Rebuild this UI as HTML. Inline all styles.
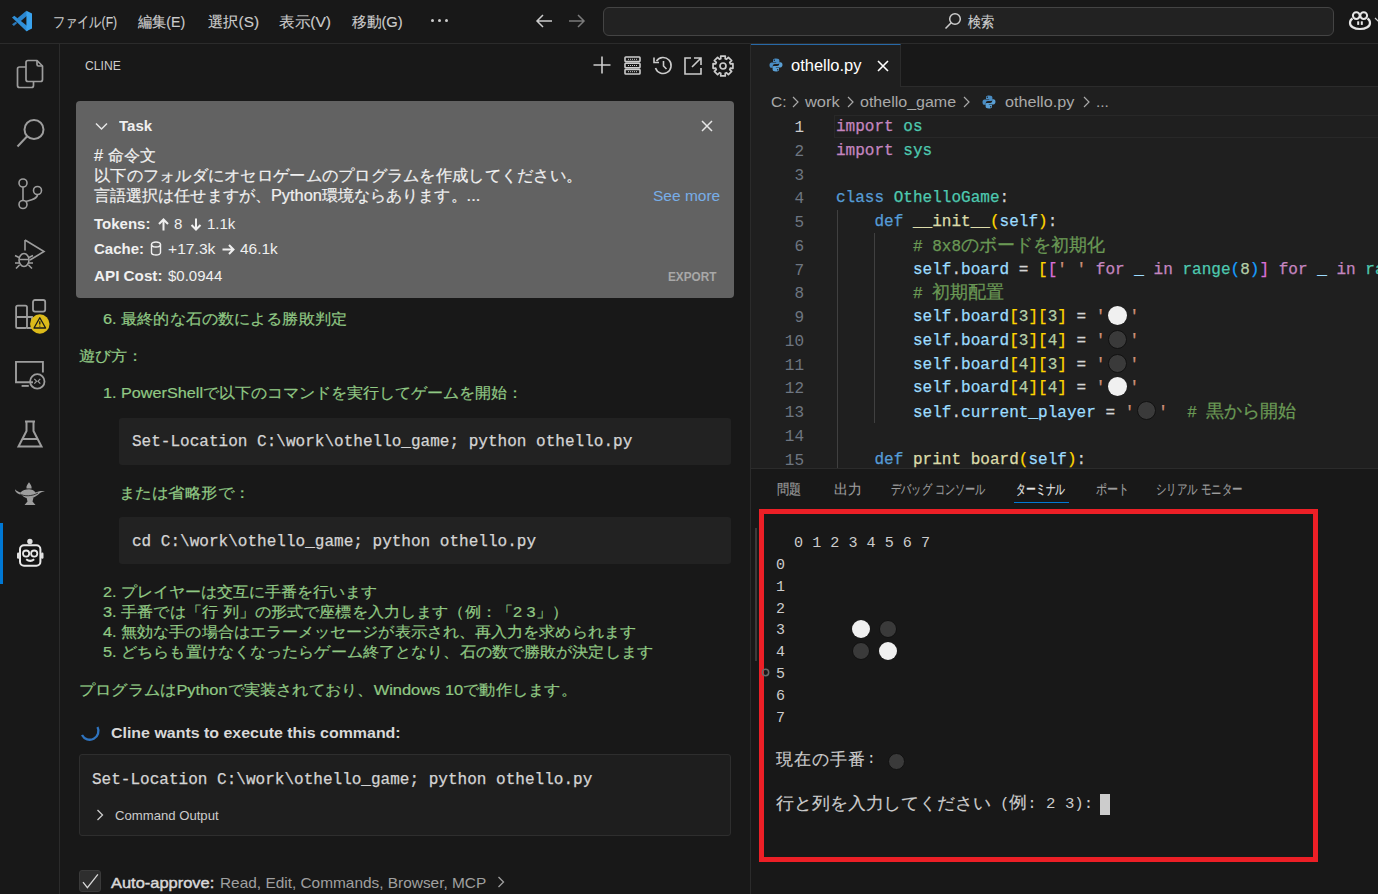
<!DOCTYPE html>
<html><head><meta charset="utf-8">
<style>
*{box-sizing:border-box;margin:0;padding:0}
html,body{width:1378px;height:894px;overflow:hidden;background:#181818;font-family:"Liberation Sans",sans-serif;color:#cccccc}
.abs{position:absolute}
.t{position:absolute;white-space:pre;line-height:1;transform-origin:0 0}
svg{position:absolute;overflow:visible}
</style></head><body>
<div class="abs" style="left:0px;top:43px;width:1378px;height:1px;background:#2b2b2b"></div>
<svg style="left:0px;top:0px" width="40" height="40" viewBox="0 0 40 40"><path d="M12 17.6L14.3 15.8L27.6 26.2V30.9L26.4 31.2Z" fill="#2f8fd8"/><path d="M26.4 10.8L27.6 15.3L20.6 21.2L17.1 18.6Z" fill="#2a86d0"/><path d="M26.4 10.8L32 13.4V28.6L26.4 31.2Z" fill="#3aa3ee"/><path d="M12 24.2L15.6 21.7L17.2 23L13.9 25.9Z" fill="#2b78b8"/></svg>
<div id="t1" class="t" style="transform:scaleX(0.8101);left:53px;top:14px;font-size:15px;color:#cccccc;font-weight:normal;font-family:'Liberation Sans',sans-serif;-webkit-text-stroke:0.15px #cccccc">ファイル(F)</div>
<div id="t2" class="t" style="transform:scaleX(0.9434);left:138px;top:14px;font-size:15px;color:#cccccc;font-weight:normal;font-family:'Liberation Sans',sans-serif;-webkit-text-stroke:0.15px #cccccc">編集(E)</div>
<div id="t3" class="t" style="transform:scaleX(1.0200);left:208px;top:14px;font-size:15px;color:#cccccc;font-weight:normal;font-family:'Liberation Sans',sans-serif;-webkit-text-stroke:0.15px #cccccc">選択(S)</div>
<div id="t4" class="t" style="transform:scaleX(1.0400);left:279px;top:14px;font-size:15px;color:#cccccc;font-weight:normal;font-family:'Liberation Sans',sans-serif;-webkit-text-stroke:0.15px #cccccc">表示(V)</div>
<div id="t5" class="t" style="transform:scaleX(0.9815);left:352px;top:14px;font-size:15px;color:#cccccc;font-weight:normal;font-family:'Liberation Sans',sans-serif;-webkit-text-stroke:0.15px #cccccc">移動(G)</div>
<div class="abs" style="left:431px;top:19px;width:3px;height:3px;background:#cccccc;border-radius:50%"></div>
<div class="abs" style="left:438px;top:19px;width:3px;height:3px;background:#cccccc;border-radius:50%"></div>
<div class="abs" style="left:445px;top:19px;width:3px;height:3px;background:#cccccc;border-radius:50%"></div>
<svg style="left:535px;top:13px" width="18" height="16" viewBox="0 0 18 16"><path d="M17 8H2M8 2L2 8L8 14" stroke="#cccccc" stroke-width="1.5" fill="none"/></svg>
<svg style="left:568px;top:13px" width="18" height="16" viewBox="0 0 18 16"><path d="M1 8H16M10 2L16 8L10 14" stroke="#7a7a7a" stroke-width="1.5" fill="none"/></svg>
<div class="abs" style="left:603px;top:7px;width:731px;height:29px;background:#222222;border:1px solid #444444;border-radius:6px"></div>
<svg style="left:944px;top:12px" width="18" height="18" viewBox="0 0 18 18"><circle cx="11" cy="7" r="5.3" stroke="#cccccc" stroke-width="1.5" fill="none"/><path d="M7.2 10.8L1.5 16.5" stroke="#cccccc" stroke-width="1.6"/></svg>
<div id="t6" class="t" style="transform:scaleX(0.8788);left:968px;top:14px;font-size:15px;color:#cccccc;font-weight:normal;font-family:'Liberation Sans',sans-serif;-webkit-text-stroke:0.15px #cccccc">検索</div>
<svg style="left:1349px;top:11px" width="22" height="19" viewBox="0 0 22 19"><path d="M3.5 7.5C1.8 8.5 1 10 1 12C1 15.5 5 18 11 18C17 18 21 15.5 21 12C21 10 20.2 8.5 18.5 7.5" stroke="#e6e6e6" stroke-width="2.2" fill="#141414"/>
<circle cx="7.3" cy="4.6" r="3.4" stroke="#e6e6e6" stroke-width="2" fill="#141414"/>
<circle cx="14.7" cy="4.6" r="3.4" stroke="#e6e6e6" stroke-width="2" fill="#141414"/>
<path d="M5 9.5H17V13.5C14 15 8 15 5 13.5Z" fill="#141414"/>
<rect x="8.2" y="10.3" width="2" height="3.6" fill="#e6e6e6"/><rect x="11.8" y="10.3" width="2" height="3.6" fill="#e6e6e6"/></svg>
<svg style="left:1374px;top:17px" width="6" height="5" viewBox="0 0 6 5"><path d="M1 1L4 4L7 1" stroke="#cccccc" stroke-width="1.2" fill="none"/></svg>
<div class="abs" style="left:59px;top:44px;width:1px;height:850px;background:#2b2b2b"></div>
<div class="abs" style="left:0px;top:523px;width:3px;height:61px;background:#0078d4"></div>
<svg style="left:16px;top:59px" width="28" height="30" viewBox="0 0 28 30"><path d="M12 1.5H21L26.5 7V20.5Q26.5 22.5 24.5 22.5H12Q10 22.5 10 20.5V3.5Q10 1.5 12 1.5Z" stroke="#9d9d9d" fill="none" stroke-width="1.6" stroke-linejoin="round" style="stroke-width:1.7"/><path d="M21 1.5V5.5Q21 7 22.5 7H26.5" stroke="#9d9d9d" fill="none" stroke-width="1.6" style="stroke-width:1.7"/><path d="M10 8H3.5Q1.5 8 1.5 10V26.5Q1.5 28.5 3.5 28.5H15.5Q17.5 28.5 17.5 26.5V22.5" stroke="#9d9d9d" fill="none" stroke-width="1.6" style="stroke-width:1.7"/></svg>
<svg style="left:16px;top:118px" width="30" height="30" viewBox="0 0 30 30"><circle cx="18" cy="11.5" r="9.5" stroke="#9d9d9d" fill="none" stroke-width="1.6" style="stroke-width:2"/><path d="M11.2 18.3L1.5 28.5" stroke="#9d9d9d" fill="none" stroke-width="1.6" style="stroke-width:2"/></svg>
<svg style="left:17px;top:178px" width="26" height="32" viewBox="0 0 26 32"><circle cx="6" cy="5" r="4" stroke="#9d9d9d" fill="none" stroke-width="1.6"/><circle cx="6" cy="26.5" r="4" stroke="#9d9d9d" fill="none" stroke-width="1.6"/><circle cx="20.5" cy="12.5" r="4" stroke="#9d9d9d" fill="none" stroke-width="1.6"/><path d="M6 9V22.5M20.5 16.5C20.5 21 14 22 8.5 23.5" stroke="#9d9d9d" fill="none" stroke-width="1.6"/></svg>
<svg style="left:14px;top:238px" width="32" height="32" viewBox="0 0 32 32"><path d="M11 2V12.5M11 2L30 13.5L16 22" stroke="#9d9d9d" fill="none" stroke-width="1.6"/><ellipse cx="10" cy="22" rx="5" ry="6.5" stroke="#9d9d9d" fill="none" stroke-width="1.6"/><path d="M1 17.5L5 19.5M1 25H5M2 30.5L5.5 27M19 17.5L15 19.5M19 25H15M18 30.5L14.5 27M5.5 21.5H14.5" stroke="#9d9d9d" fill="none" stroke-width="1.6"/></svg>
<svg style="left:10px;top:292px" width="40" height="48" viewBox="0 0 40 48"><rect x="6.1" y="13.6" width="10.9" height="22.4" rx="1.6" stroke="#9d9d9d" fill="none" stroke-width="1.6" style="stroke-width:1.8"/><path d="M6.1 25H22V36H17" stroke="#9d9d9d" fill="none" stroke-width="1.6" style="stroke-width:1.8"/>
<rect x="23" y="8" width="12.2" height="11.6" rx="2" stroke="#9d9d9d" fill="none" stroke-width="1.6" style="stroke-width:1.8"/>
<circle cx="29.8" cy="32" r="9.7" fill="#dcba1a"/>
<path d="M29.8 25.8L35.6 36H24Z" stroke="#1a1a1a" stroke-width="1.3" fill="none" stroke-linejoin="round"/><path d="M29.8 29.3V32.6M29.8 33.8V34.6" stroke="#1a1a1a" stroke-width="1.3"/></svg>
<svg style="left:10px;top:355px" width="40" height="40" viewBox="0 0 40 40"><path d="M23 27.3H6V6.9H32.9V17.4" stroke="#9d9d9d" fill="none" stroke-width="1.6" style="stroke-width:1.9"/><path d="M11.6 30.9H18.8" stroke="#9d9d9d" fill="none" stroke-width="1.6" style="stroke-width:1.9"/><circle cx="27.3" cy="26.4" r="7.2" stroke="#9d9d9d" fill="none" stroke-width="1.6" style="stroke-width:1.8"/><path d="M24.3 23.8L26.6 26.2L24.3 28.6M30.3 23.8L28 26.2L30.3 28.6" stroke="#9d9d9d" fill="none" stroke-width="1.6" style="stroke-width:1.2"/></svg>
<svg style="left:17px;top:420px" width="26" height="28" viewBox="0 0 26 28"><path d="M8 1.5H18M9.5 1.5V11L1.5 26.5H24.5L16.5 11V1.5M5 19H21" stroke="#9d9d9d" fill="none" stroke-width="1.6" style="stroke-width:2"/></svg>
<svg style="left:14px;top:481px" width="32" height="26" viewBox="0 0 32 26"><path d="M15 1.2C13.6 3 12 5 12.5 7.4H17.6C18 5 16.4 3 15 1.2Z" fill="#9d9d9d"/><path d="M1 8.3C1 11 3.5 13 8 14.2C10 16.5 13 17.3 16 17.3C20 17.3 23 14.5 26 12C28 10.8 29.5 10.5 31 10.2C27 9.6 24 10.2 21.5 11.5C20 9.2 17.5 8.2 15 8.2C11.5 8.2 8.5 9.2 6.5 11.5C4.5 11 2.5 10 1 8.3Z" fill="#9d9d9d"/><path d="M6 13C10 15.5 18 15.5 24 12" stroke="#181818" stroke-width="0.8" fill="none"/><path d="M12.5 16.5H19.5L18.5 20.5L21.5 24H10.5L13.5 20.5Z" fill="#9d9d9d"/></svg>
<svg style="left:15px;top:537px" width="30" height="32" viewBox="0 0 30 32"><circle cx="14.9" cy="4.4" r="2.7" fill="#e0e0e0"/>
<rect x="5" y="8.3" width="20.4" height="20.4" rx="4" fill="#141414" stroke="#e8e8e8" stroke-width="2"/>
<rect x="2" y="15.6" width="2.5" height="6.1" rx="1.2" fill="#e0e0e0"/><rect x="26" y="15.6" width="2.5" height="6.1" rx="1.2" fill="#e0e0e0"/>
<circle cx="11.1" cy="16.6" r="3.1" fill="none" stroke="#e8e8e8" stroke-width="1.8"/><circle cx="19.2" cy="16.6" r="3.1" fill="none" stroke="#e8e8e8" stroke-width="1.8"/>
<path d="M11.2 22.2Q15.2 25.5 19.2 22.2" stroke="#e8e8e8" stroke-width="2" fill="none"/></svg>
<div class="abs" style="left:750px;top:44px;width:1px;height:850px;background:#2b2b2b"></div>
<div id="t7" class="t" style="transform:scaleX(0.9000);left:85px;top:59px;font-size:13.5px;color:#cccccc;font-weight:normal;font-family:'Liberation Sans',sans-serif;">CLINE</div>
<svg style="left:593px;top:56px" width="18" height="18" viewBox="0 0 18 18"><path d="M9 0.5V17.5M0.5 9H17.5" stroke="#cccccc" stroke-width="1.6"/></svg>
<svg style="left:624px;top:56px" width="17" height="19" viewBox="0 0 17 19"><rect x="1" y="1" width="15" height="4.6" rx="0.8" stroke="#cccccc" fill="none" stroke-width="1.6"/><rect x="1" y="7.2" width="15" height="4.6" rx="0.8" stroke="#cccccc" fill="none" stroke-width="1.6"/><rect x="1" y="13.4" width="15" height="4.6" rx="0.8" stroke="#cccccc" fill="none" stroke-width="1.6"/><path d="M4 3.3H13M4 9.5H13M4 15.7H13" stroke="#cccccc" stroke-width="1" stroke-dasharray="1 1"/></svg>
<svg style="left:653px;top:56px" width="20" height="19" viewBox="0 0 20 19"><path d="M3.5 5A8 8 0 1 1 2.5 12" stroke="#cccccc" fill="none" stroke-width="1.6"/><path d="M1 1.5V6.5H6" stroke="#cccccc" fill="none" stroke-width="1.6"/><path d="M10.5 5V10L13.5 13" stroke="#cccccc" fill="none" stroke-width="1.6"/></svg>
<svg style="left:684px;top:57px" width="18" height="18" viewBox="0 0 18 18"><path d="M7 1H1V17H17V11M10 1H17V8M17 1L8 10" stroke="#cccccc" fill="none" stroke-width="1.6"/></svg>
<svg style="left:712px;top:55px" width="22" height="22" viewBox="0 0 22 22"><path d="M18.27 8.78 L20.94 8.71 L20.94 13.29 L18.27 13.22 L17.71 14.57 L19.65 16.41 L16.41 19.65 L14.57 17.71 L13.22 18.27 L13.29 20.94 L8.71 20.94 L8.78 18.27 L7.43 17.71 L5.59 19.65 L2.35 16.41 L4.29 14.57 L3.73 13.22 L1.06 13.29 L1.06 8.71 L3.73 8.78 L4.29 7.43 L2.35 5.59 L5.59 2.35 L7.43 4.29 L8.78 3.73 L8.71 1.06 L13.29 1.06 L13.22 3.73 L14.57 4.29 L16.41 2.35 L19.65 5.59 L17.71 7.43Z" stroke="#cccccc" fill="none" stroke-width="1.6" style="stroke-width:1.7;stroke-linejoin:round"/><circle cx="11" cy="11" r="3" stroke="#cccccc" fill="none" stroke-width="1.6" style="stroke-width:1.7"/></svg>
<div class="abs" style="left:76px;top:101px;width:658px;height:197px;background:#626262;border-radius:4px"></div>
<svg style="left:95px;top:122px" width="13" height="9" viewBox="0 0 13 9"><path d="M1 1.5L6.5 7L12 1.5" stroke="#e6e6e6" stroke-width="1.5" fill="none"/></svg>
<div id="t8" class="t" style="transform:scaleX(0.9706);left:119px;top:118px;font-size:15.5px;color:#f0f0f0;font-weight:bold;font-family:'Liberation Sans',sans-serif;">Task</div>
<svg style="left:701px;top:120px" width="12" height="12" viewBox="0 0 12 12"><path d="M1 1L11 11M11 1L1 11" stroke="#e6e6e6" stroke-width="1.5"/></svg>
<div id="t9" class="t" style="left:94px;top:147px;font-size:16.3px;color:#f0f0f0;font-weight:normal;font-family:'Liberation Sans',sans-serif;-webkit-text-stroke:0.2px #f0f0f0"># 命令文</div>
<div id="t10" class="t" style="transform:scaleX(1.0170);left:94px;top:167px;font-size:16.3px;color:#f0f0f0;font-weight:normal;font-family:'Liberation Sans',sans-serif;-webkit-text-stroke:0.2px #f0f0f0">以下のフォルダにオセロゲームのプログラムを作成してください。</div>
<div id="t11" class="t" style="transform:scaleX(1.0052);left:94px;top:187px;font-size:16.3px;color:#f0f0f0;font-weight:normal;font-family:'Liberation Sans',sans-serif;-webkit-text-stroke:0.2px #f0f0f0">言語選択は任せますが、Python環境ならあります。...</div>
<div id="t12" class="t" style="transform:scaleX(1.0000);left:653px;top:188px;font-size:15.5px;color:#78aee8;font-weight:normal;font-family:'Liberation Sans',sans-serif;">See more</div>
<div id="t13" class="t" style="transform:scaleX(1.0000);left:94px;top:216px;font-size:15px;color:#f0f0f0;font-weight:normal;font-family:'Liberation Sans',sans-serif;"><b>Tokens:</b></div>
<svg style="left:158px;top:218px" width="11" height="13" viewBox="0 0 11 13"><path d="M5.5 12.5V1.5M1 6L5.5 1.5L10 6" stroke="#f0f0f0" stroke-width="2" fill="none"/></svg>
<div id="t14" class="t" style="left:174px;top:216px;font-size:15px;color:#f0f0f0;font-weight:normal;font-family:'Liberation Sans',sans-serif;">8</div>
<svg style="left:190px;top:218px" width="12" height="13" viewBox="0 0 12 13"><path d="M6 0.5V11.5M1.5 7L6 11.5L10.5 7" stroke="#f0f0f0" stroke-width="2" fill="none"/></svg>
<div id="t15" class="t" style="transform:scaleX(1.0000);left:207px;top:216px;font-size:15px;color:#f0f0f0;font-weight:normal;font-family:'Liberation Sans',sans-serif;">1.1k</div>
<div id="t16" class="t" style="transform:scaleX(1.0000);left:94px;top:241px;font-size:15px;color:#f0f0f0;font-weight:normal;font-family:'Liberation Sans',sans-serif;"><b>Cache:</b></div>
<svg style="left:150px;top:241px" width="12" height="15" viewBox="0 0 12 15"><path d="M1.5 3.5V11.5C1.5 13 3.5 14 6 14C8.5 14 10.5 13 10.5 11.5V3.5" stroke="#f0f0f0" stroke-width="1.4" fill="none"/><ellipse cx="6" cy="3.5" rx="4.5" ry="2.5" stroke="#f0f0f0" stroke-width="1.4" fill="none"/></svg>
<div id="t17" class="t" style="transform:scaleX(1.0435);left:168px;top:241px;font-size:15px;color:#f0f0f0;font-weight:normal;font-family:'Liberation Sans',sans-serif;">+17.3k</div>
<svg style="left:222px;top:244px" width="13" height="11" viewBox="0 0 13 11"><path d="M0.5 5.5H11.5M7 1L11.5 5.5L7 10" stroke="#f0f0f0" stroke-width="2" fill="none"/></svg>
<div id="t18" class="t" style="transform:scaleX(1.0270);left:240px;top:241px;font-size:15px;color:#f0f0f0;font-weight:normal;font-family:'Liberation Sans',sans-serif;">46.1k</div>
<div id="t19" class="t" style="transform:scaleX(1.0149);left:94px;top:268px;font-size:15px;color:#f0f0f0;font-weight:normal;font-family:'Liberation Sans',sans-serif;"><b>API Cost:</b></div>
<div id="t20" class="t" style="transform:scaleX(1.0000);left:168px;top:268px;font-size:15px;color:#f0f0f0;font-weight:normal;font-family:'Liberation Sans',sans-serif;">$0.0944</div>
<div id="t21" class="t" style="transform:scaleX(0.9074);left:668px;top:270px;font-size:13px;color:#a8a8a8;font-weight:bold;font-family:'Liberation Sans',sans-serif;">EXPORT</div>
<div id="t22" class="t" style="transform:scaleX(1.0752);left:103px;top:311px;font-size:15.2px;color:#90c884;font-weight:normal;font-family:'Liberation Sans',sans-serif;-webkit-text-stroke:0.2px #90c884">6. 最終的な石の数による勝敗判定</div>
<div id="t23" class="t" style="transform:scaleX(1.0741);left:79px;top:348px;font-size:15.2px;color:#90c884;font-weight:normal;font-family:'Liberation Sans',sans-serif;-webkit-text-stroke:0.2px #90c884">遊び方：</div>
<div id="t24" class="t" style="transform:scaleX(1.0670);left:103px;top:385px;font-size:15.2px;color:#90c884;font-weight:normal;font-family:'Liberation Sans',sans-serif;-webkit-text-stroke:0.2px #90c884">1. PowerShellで以下のコマンドを実行してゲームを開始：</div>
<div class="abs" style="left:119px;top:418px;width:612px;height:47px;background:#222222;border-radius:3px"></div>
<div id="t25" class="t" style="left:132px;top:433.5px;font-size:16.04px;color:#d4d4d4;font-weight:normal;font-family:'Liberation Mono',monospace;-webkit-text-stroke-width:0.25px">Set-Location C:\work\othello_game; python othello.py</div>
<div id="t26" class="t" style="transform:scaleX(1.0965);left:119px;top:485px;font-size:15.2px;color:#90c884;font-weight:normal;font-family:'Liberation Sans',sans-serif;-webkit-text-stroke:0.2px #90c884">または省略形で：</div>
<div class="abs" style="left:119px;top:517px;width:612px;height:47px;background:#222222;border-radius:3px"></div>
<div id="t27" class="t" style="left:132px;top:533.5px;font-size:16.04px;color:#d4d4d4;font-weight:normal;font-family:'Liberation Mono',monospace;-webkit-text-stroke-width:0.25px">cd C:\work\othello_game; python othello.py</div>
<div id="t28" class="t" style="transform:scaleX(1.0661);left:103px;top:584px;font-size:15.2px;color:#90c884;font-weight:normal;font-family:'Liberation Sans',sans-serif;-webkit-text-stroke:0.2px #90c884">2. プレイヤーは交互に手番を行います</div>
<div id="t29" class="t" style="transform:scaleX(1.0757);left:103px;top:604px;font-size:15.2px;color:#90c884;font-weight:normal;font-family:'Liberation Sans',sans-serif;-webkit-text-stroke:0.2px #90c884">3. 手番では「行 列」の形式で座標を入力します（例：「2 3」）</div>
<div id="t30" class="t" style="transform:scaleX(1.0724);left:103px;top:624px;font-size:15.2px;color:#90c884;font-weight:normal;font-family:'Liberation Sans',sans-serif;-webkit-text-stroke:0.2px #90c884">4. 無効な手の場合はエラーメッセージが表示され、再入力を求められます</div>
<div id="t31" class="t" style="transform:scaleX(1.0742);left:103px;top:644px;font-size:15.2px;color:#90c884;font-weight:normal;font-family:'Liberation Sans',sans-serif;-webkit-text-stroke:0.2px #90c884">5. どちらも置けなくなったらゲーム終了となり、石の数で勝敗が決定します</div>
<div id="t32" class="t" style="transform:scaleX(1.0822);left:79px;top:682px;font-size:15.2px;color:#90c884;font-weight:normal;font-family:'Liberation Sans',sans-serif;-webkit-text-stroke:0.2px #90c884">プログラムはPythonで実装されており、Windows 10で動作します。</div>
<svg style="left:80px;top:725px" width="20" height="17" viewBox="0 0 20 17"><path d="M17.5 2A8 8 0 0 1 2 10" stroke="#2f74c0" stroke-width="2.3" fill="none"/></svg>
<div id="t33" class="t" style="transform:scaleX(1.0285);left:111px;top:725px;font-size:15.5px;color:#d8d8d8;font-weight:bold;font-family:'Liberation Sans',sans-serif;">Cline wants to execute this command:</div>
<div class="abs" style="left:79px;top:754px;width:652px;height:82px;background:#1e1e1e;border:1px solid #2e2e2e;border-radius:3px"></div>
<div id="t34" class="t" style="left:92px;top:771.5px;font-size:16.04px;color:#d4d4d4;font-weight:normal;font-family:'Liberation Mono',monospace;-webkit-text-stroke-width:0.25px">Set-Location C:\work\othello_game; python othello.py</div>
<svg style="left:96px;top:809px" width="8" height="12" viewBox="0 0 8 12"><path d="M1.5 1L6.5 6L1.5 11" stroke="#cccccc" stroke-width="1.3" fill="none"/></svg>
<div id="t35" class="t" style="transform:scaleX(1.0097);left:115px;top:809px;font-size:13px;color:#cccccc;font-weight:normal;font-family:'Liberation Sans',sans-serif;">Command Output</div>
<div class="abs" style="left:79px;top:870px;width:22px;height:22px;background:#2e2e2e;border:1px solid #3a3a3a;border-radius:3px"></div>
<svg style="left:82px;top:873px" width="17" height="16" viewBox="0 0 17 16"><path d="M1 9.2L5.4 14.6L15.9 1.4" stroke="#d8d8d8" stroke-width="1.3" fill="none"/></svg>
<div id="t36" class="t" style="transform:scaleX(1.0957);left:111px;top:875px;font-size:15px;color:#d8d8d8;font-weight:normal;font-family:'Liberation Sans',sans-serif;-webkit-text-stroke:0.45px #d8d8d8">Auto-approve:</div>
<div id="t37" class="t" style="transform:scaleX(1.0270);left:220px;top:875px;font-size:15px;color:#a0a0a0;font-weight:normal;font-family:'Liberation Sans',sans-serif;">Read, Edit, Commands, Browser, MCP</div>
<svg style="left:497px;top:876px" width="8" height="12" viewBox="0 0 8 12"><path d="M1.5 1L6.5 6L1.5 11" stroke="#a0a0a0" stroke-width="1.3" fill="none"/></svg>
<div class="abs" style="left:751px;top:44px;width:627px;height:424px;background:#1f1f1f"></div>
<div class="abs" style="left:751px;top:44px;width:627px;height:43px;background:#181818;border-bottom:1px solid #2b2b2b"></div>
<div class="abs" style="left:751px;top:44px;width:150px;height:43px;background:#1f1f1f;border-top:1px solid #2769a8;border-right:1px solid #2b2b2b"></div>
<svg style="left:769px;top:58px" width="14" height="14" viewBox="0 0 14 14"><path d="M7 0.5C4 0.5 4 1.7 4 2.5V4H7.2V4.6H2.6C1.2 4.6 0.5 5.7 0.5 7.2C0.5 8.8 1.2 9.8 2.6 9.8H3.8V8.1C3.8 6.9 4.7 6.1 5.9 6.1H8.9C9.8 6.1 10.4 5.4 10.4 4.6V2.5C10.4 1.4 9.5 0.5 7 0.5Z" fill="#4a8cc2"/><path d="M7 13.5C10 13.5 10 12.3 10 11.5V10H6.8V9.4H11.4C12.8 9.4 13.5 8.3 13.5 6.8C13.5 5.2 12.8 4.2 11.4 4.2H10.2V5.9C10.2 7.1 9.3 7.9 8.1 7.9H5.1C4.2 7.9 3.6 8.6 3.6 9.4V11.5C3.6 12.6 4.5 13.5 7 13.5Z" fill="#5a9fd4"/><circle cx="5.3" cy="2.3" r="0.7" fill="#1f1f1f"/><circle cx="8.7" cy="11.7" r="0.7" fill="#1f1f1f"/></svg>
<div id="t38" class="t" style="transform:scaleX(1.0290);left:791px;top:58px;font-size:16px;color:#ffffff;font-weight:normal;font-family:'Liberation Sans',sans-serif;">othello.py</div>
<svg style="left:877px;top:60px" width="12" height="12" viewBox="0 0 12 12"><path d="M1 1L11 11M11 1L1 11" stroke="#ffffff" stroke-width="1.6"/></svg>
<div id="t39" class="t" style="left:771px;top:94px;font-size:15.5px;color:#a9a9a9;font-weight:normal;font-family:'Liberation Sans',sans-serif;">C:</div>
<svg style="left:792px;top:96px" width="7" height="12" viewBox="0 0 7 12"><path d="M1 1L6 6L1 11" stroke="#a9a9a9" stroke-width="1.2" fill="none"/></svg>
<div id="t40" class="t" style="transform:scaleX(1.0606);left:805px;top:94px;font-size:15.5px;color:#a9a9a9;font-weight:normal;font-family:'Liberation Sans',sans-serif;">work</div>
<svg style="left:847px;top:96px" width="7" height="12" viewBox="0 0 7 12"><path d="M1 1L6 6L1 11" stroke="#a9a9a9" stroke-width="1.2" fill="none"/></svg>
<div id="t41" class="t" style="transform:scaleX(1.0323);left:860px;top:94px;font-size:15.5px;color:#a9a9a9;font-weight:normal;font-family:'Liberation Sans',sans-serif;">othello_game</div>
<svg style="left:963px;top:96px" width="7" height="12" viewBox="0 0 7 12"><path d="M1 1L6 6L1 11" stroke="#a9a9a9" stroke-width="1.2" fill="none"/></svg>
<svg style="left:982px;top:95px" width="14" height="14" viewBox="0 0 14 14"><path d="M7 0.5C4 0.5 4 1.7 4 2.5V4H7.2V4.6H2.6C1.2 4.6 0.5 5.7 0.5 7.2C0.5 8.8 1.2 9.8 2.6 9.8H3.8V8.1C3.8 6.9 4.7 6.1 5.9 6.1H8.9C9.8 6.1 10.4 5.4 10.4 4.6V2.5C10.4 1.4 9.5 0.5 7 0.5Z" fill="#4a8cc2"/><path d="M7 13.5C10 13.5 10 12.3 10 11.5V10H6.8V9.4H11.4C12.8 9.4 13.5 8.3 13.5 6.8C13.5 5.2 12.8 4.2 11.4 4.2H10.2V5.9C10.2 7.1 9.3 7.9 8.1 7.9H5.1C4.2 7.9 3.6 8.6 3.6 9.4V11.5C3.6 12.6 4.5 13.5 7 13.5Z" fill="#5a9fd4"/><circle cx="5.3" cy="2.3" r="0.7" fill="#1f1f1f"/><circle cx="8.7" cy="11.7" r="0.7" fill="#1f1f1f"/></svg>
<div id="t42" class="t" style="transform:scaleX(1.0448);left:1005px;top:94px;font-size:15.5px;color:#a9a9a9;font-weight:normal;font-family:'Liberation Sans',sans-serif;">othello.py</div>
<svg style="left:1083px;top:96px" width="7" height="12" viewBox="0 0 7 12"><path d="M1 1L6 6L1 11" stroke="#a9a9a9" stroke-width="1.2" fill="none"/></svg>
<div id="t43" class="t" style="left:1096px;top:94px;font-size:15.5px;color:#a9a9a9;font-weight:normal;font-family:'Liberation Sans',sans-serif;">...</div>
<div class="abs" style="left:834px;top:115px;width:544px;height:23px;border:1px solid #282828;border-right:none"></div>
<div class="abs" style="left:837px;top:210px;width:1px;height:258px;background:#404040"></div>
<div class="abs" style="left:874px;top:233px;width:1px;height:190px;background:#404040"></div>
<div class="t" style="left:751px;width:53px;text-align:right;top:119.5px;font-family:'Liberation Mono',monospace;font-size:16px;color:#cccccc">1</div>
<div class="t" style="left:836px;top:119px;font-family:'Liberation Mono',monospace;font-size:16.04px;color:#d4d4d4;-webkit-text-stroke-width:0.25px"><span style="color:#c586c0">import</span> <span style="color:#4ec9b0">os</span></div>
<div class="t" style="left:751px;width:53px;text-align:right;top:143.5px;font-family:'Liberation Mono',monospace;font-size:16px;color:#6e7681">2</div>
<div class="t" style="left:836px;top:143px;font-family:'Liberation Mono',monospace;font-size:16.04px;color:#d4d4d4;-webkit-text-stroke-width:0.25px"><span style="color:#c586c0">import</span> <span style="color:#4ec9b0">sys</span></div>
<div class="t" style="left:751px;width:53px;text-align:right;top:167.5px;font-family:'Liberation Mono',monospace;font-size:16px;color:#6e7681">3</div>
<div class="t" style="left:751px;width:53px;text-align:right;top:190.5px;font-family:'Liberation Mono',monospace;font-size:16px;color:#6e7681">4</div>
<div class="t" style="left:836px;top:190px;font-family:'Liberation Mono',monospace;font-size:16.04px;color:#d4d4d4;-webkit-text-stroke-width:0.25px"><span style="color:#569cd6">class</span> <span style="color:#4ec9b0">OthelloGame</span>:</div>
<div class="t" style="left:751px;width:53px;text-align:right;top:214.5px;font-family:'Liberation Mono',monospace;font-size:16px;color:#6e7681">5</div>
<div class="t" style="left:836px;top:214px;font-family:'Liberation Mono',monospace;font-size:16.04px;color:#d4d4d4;-webkit-text-stroke-width:0.25px">    <span style="color:#569cd6">def</span> <span style="color:#dcdcaa">__init__</span><span style="color:#ffd700">(</span><span style="color:#9cdcfe">self</span><span style="color:#ffd700">)</span>:</div>
<div class="t" style="left:751px;width:53px;text-align:right;top:238.5px;font-family:'Liberation Mono',monospace;font-size:16px;color:#6e7681">6</div>
<div class="t" style="left:836px;top:238px;font-family:'Liberation Mono',monospace;font-size:16.04px;color:#d4d4d4;-webkit-text-stroke-width:0.25px">        <span style="color:#6a9955"># 8x8<span style="font-size:17.5px">のボードを初期化</span></span></div>
<div class="t" style="left:751px;width:53px;text-align:right;top:262.5px;font-family:'Liberation Mono',monospace;font-size:16px;color:#6e7681">7</div>
<div class="t" style="left:836px;top:262px;font-family:'Liberation Mono',monospace;font-size:16.04px;color:#d4d4d4;-webkit-text-stroke-width:0.25px">        <span style="color:#9cdcfe">self</span>.<span style="color:#9cdcfe">board</span> = <span style="color:#ffd700">[</span><span style="color:#da70d6">[</span><span style="color:#ce9178">' '</span> <span style="color:#c586c0">for</span> <span style="color:#9cdcfe">_</span> <span style="color:#c586c0">in</span> <span style="color:#4ec9b0">range</span><span style="color:#179fff">(</span><span style="color:#b5cea8">8</span><span style="color:#179fff">)</span><span style="color:#da70d6">]</span> <span style="color:#c586c0">for</span> <span style="color:#9cdcfe">_</span> <span style="color:#c586c0">in</span> <span style="color:#4ec9b0">ra</span></div>
<div class="t" style="left:751px;width:53px;text-align:right;top:285.5px;font-family:'Liberation Mono',monospace;font-size:16px;color:#6e7681">8</div>
<div class="t" style="left:836px;top:285px;font-family:'Liberation Mono',monospace;font-size:16.04px;color:#d4d4d4;-webkit-text-stroke-width:0.25px">        <span style="color:#6a9955"># <span style="font-size:17.5px">初期配置</span></span></div>
<div class="t" style="left:751px;width:53px;text-align:right;top:309.5px;font-family:'Liberation Mono',monospace;font-size:16px;color:#6e7681">9</div>
<div class="t" style="left:836px;top:309px;font-family:'Liberation Mono',monospace;font-size:16.04px;color:#d4d4d4;-webkit-text-stroke-width:0.25px">        <span style="color:#9cdcfe">self</span>.<span style="color:#9cdcfe">board</span><span style="color:#ffd700">[</span><span style="color:#b5cea8">3</span><span style="color:#ffd700">]</span><span style="color:#ffd700">[</span><span style="color:#b5cea8">3</span><span style="color:#ffd700">]</span> = <span style="color:#ce9178">'<span style="display:inline-block;width:24px"></span>'</span></div>
<div class="t" style="left:751px;width:53px;text-align:right;top:333.5px;font-family:'Liberation Mono',monospace;font-size:16px;color:#6e7681">10</div>
<div class="t" style="left:836px;top:333px;font-family:'Liberation Mono',monospace;font-size:16.04px;color:#d4d4d4;-webkit-text-stroke-width:0.25px">        <span style="color:#9cdcfe">self</span>.<span style="color:#9cdcfe">board</span><span style="color:#ffd700">[</span><span style="color:#b5cea8">3</span><span style="color:#ffd700">]</span><span style="color:#ffd700">[</span><span style="color:#b5cea8">4</span><span style="color:#ffd700">]</span> = <span style="color:#ce9178">'<span style="display:inline-block;width:24px"></span>'</span></div>
<div class="t" style="left:751px;width:53px;text-align:right;top:357.5px;font-family:'Liberation Mono',monospace;font-size:16px;color:#6e7681">11</div>
<div class="t" style="left:836px;top:357px;font-family:'Liberation Mono',monospace;font-size:16.04px;color:#d4d4d4;-webkit-text-stroke-width:0.25px">        <span style="color:#9cdcfe">self</span>.<span style="color:#9cdcfe">board</span><span style="color:#ffd700">[</span><span style="color:#b5cea8">4</span><span style="color:#ffd700">]</span><span style="color:#ffd700">[</span><span style="color:#b5cea8">3</span><span style="color:#ffd700">]</span> = <span style="color:#ce9178">'<span style="display:inline-block;width:24px"></span>'</span></div>
<div class="t" style="left:751px;width:53px;text-align:right;top:380.5px;font-family:'Liberation Mono',monospace;font-size:16px;color:#6e7681">12</div>
<div class="t" style="left:836px;top:380px;font-family:'Liberation Mono',monospace;font-size:16.04px;color:#d4d4d4;-webkit-text-stroke-width:0.25px">        <span style="color:#9cdcfe">self</span>.<span style="color:#9cdcfe">board</span><span style="color:#ffd700">[</span><span style="color:#b5cea8">4</span><span style="color:#ffd700">]</span><span style="color:#ffd700">[</span><span style="color:#b5cea8">4</span><span style="color:#ffd700">]</span> = <span style="color:#ce9178">'<span style="display:inline-block;width:24px"></span>'</span></div>
<div class="t" style="left:751px;width:53px;text-align:right;top:404.5px;font-family:'Liberation Mono',monospace;font-size:16px;color:#6e7681">13</div>
<div class="t" style="left:836px;top:404px;font-family:'Liberation Mono',monospace;font-size:16.04px;color:#d4d4d4;-webkit-text-stroke-width:0.25px">        <span style="color:#9cdcfe">self</span>.<span style="color:#9cdcfe">current_player</span> = <span style="color:#ce9178">'<span style="display:inline-block;width:24px"></span>'</span>  <span style="color:#6a9955"># <span style="font-size:17.5px">黒から開始</span></span></div>
<div class="t" style="left:751px;width:53px;text-align:right;top:428.5px;font-family:'Liberation Mono',monospace;font-size:16px;color:#6e7681">14</div>
<div class="t" style="left:751px;width:53px;text-align:right;top:452.5px;font-family:'Liberation Mono',monospace;font-size:16px;color:#6e7681">15</div>
<div class="t" style="left:836px;top:452px;font-family:'Liberation Mono',monospace;font-size:16.04px;color:#d4d4d4;-webkit-text-stroke-width:0.25px">    <span style="color:#569cd6">def</span> <span style="color:#dcdcaa">print board</span><span style="color:#ffd700">(</span><span style="color:#9cdcfe">self</span><span style="color:#ffd700">)</span>:</div>
<div class="abs" style="left:1108px;top:306px;width:19px;height:19px;border-radius:50%;background:#f0f0f0"></div>
<div class="abs" style="left:1108px;top:330px;width:19px;height:19px;border-radius:50%;background:#3a3a3a;border:1px solid #111"></div>
<div class="abs" style="left:1108px;top:354px;width:19px;height:19px;border-radius:50%;background:#3a3a3a;border:1px solid #111"></div>
<div class="abs" style="left:1108px;top:377px;width:19px;height:19px;border-radius:50%;background:#f0f0f0"></div>
<div class="abs" style="left:1137px;top:401px;width:19px;height:19px;border-radius:50%;background:#3a3a3a;border:1px solid #111"></div>
<div class="abs" style="left:751px;top:468px;width:627px;height:426px;background:#181818;border-top:1px solid #2b2b2b"></div>
<div id="t44" class="t" style="transform:scaleX(0.8710);left:777px;top:482px;font-size:14px;color:#9d9d9d;font-weight:normal;font-family:'Liberation Sans',sans-serif;-webkit-text-stroke:0.15px #9d9d9d">問題</div>
<div id="t45" class="t" style="transform:scaleX(1.0000);left:834px;top:482px;font-size:14px;color:#9d9d9d;font-weight:normal;font-family:'Liberation Sans',sans-serif;-webkit-text-stroke:0.15px #9d9d9d">出力</div>
<div id="t46" class="t" style="transform:scaleX(0.7273);left:891px;top:482px;font-size:14px;color:#9d9d9d;font-weight:normal;font-family:'Liberation Sans',sans-serif;-webkit-text-stroke:0.15px #9d9d9d">デバッグ コンソール</div>
<div id="t47" class="t" style="transform:scaleX(0.7042);left:1016px;top:482px;font-size:14px;color:#e7e7e7;font-weight:normal;font-family:'Liberation Sans',sans-serif;-webkit-text-stroke:0.15px #e7e7e7">ターミナル</div>
<div id="t48" class="t" style="transform:scaleX(0.7949);left:1096px;top:482px;font-size:14px;color:#9d9d9d;font-weight:normal;font-family:'Liberation Sans',sans-serif;-webkit-text-stroke:0.15px #9d9d9d">ポート</div>
<div id="t49" class="t" style="transform:scaleX(0.7478);left:1156px;top:482px;font-size:14px;color:#9d9d9d;font-weight:normal;font-family:'Liberation Sans',sans-serif;-webkit-text-stroke:0.15px #9d9d9d">シリアル モニター</div>
<div class="abs" style="left:1014px;top:502px;width:55px;height:1px;background:#0078d4"></div>
<div class="abs" style="left:755px;top:528px;width:2px;height:133px;background:#3a3a3a"></div>
<div id="t50" class="t" style="transform:scaleX(1.0075);left:794px;top:536px;font-size:15px;color:#cccccc;font-weight:normal;font-family:'Liberation Mono',monospace;">0 1 2 3 4 5 6 7</div>
<div id="t51" class="t" style="left:776px;top:557.8px;font-size:15px;color:#cccccc;font-weight:normal;font-family:'Liberation Mono',monospace;">0</div>
<div id="t52" class="t" style="left:776px;top:579.7px;font-size:15px;color:#cccccc;font-weight:normal;font-family:'Liberation Mono',monospace;">1</div>
<div id="t53" class="t" style="left:776px;top:601.5px;font-size:15px;color:#cccccc;font-weight:normal;font-family:'Liberation Mono',monospace;">2</div>
<div id="t54" class="t" style="left:776px;top:623.4px;font-size:15px;color:#cccccc;font-weight:normal;font-family:'Liberation Mono',monospace;">3</div>
<div id="t55" class="t" style="left:776px;top:645.3px;font-size:15px;color:#cccccc;font-weight:normal;font-family:'Liberation Mono',monospace;">4</div>
<div id="t56" class="t" style="left:776px;top:667.1px;font-size:15px;color:#cccccc;font-weight:normal;font-family:'Liberation Mono',monospace;">5</div>
<div id="t57" class="t" style="left:776px;top:689px;font-size:15px;color:#cccccc;font-weight:normal;font-family:'Liberation Mono',monospace;">6</div>
<div id="t58" class="t" style="left:776px;top:710.8px;font-size:15px;color:#cccccc;font-weight:normal;font-family:'Liberation Mono',monospace;">7</div>
<div class="abs" style="left:851.5px;top:619.6px;width:18px;height:18px;border-radius:50%;background:#f0f0f0"></div>
<div class="abs" style="left:878.5px;top:619.6px;width:18px;height:18px;border-radius:50%;background:#3a3a3a;border:1px solid #111"></div>
<div class="abs" style="left:851.5px;top:641.8px;width:18px;height:18px;border-radius:50%;background:#3a3a3a;border:1px solid #111"></div>
<div class="abs" style="left:878.5px;top:641.8px;width:18px;height:18px;border-radius:50%;background:#f0f0f0"></div>
<div id="t59" class="t" style="left:776px;top:751px;font-size:17px;color:#cccccc;font-weight:normal;font-family:'Liberation Sans',sans-serif;letter-spacing:1.1px;-webkit-text-stroke:0.15px #cccccc">現在の手番</div>
<div id="t60" class="t" style="left:866.8px;top:752px;font-size:15px;color:#cccccc;font-weight:normal;font-family:'Liberation Mono',monospace;">:</div>
<div class="abs" style="left:887.5px;top:752.5px;width:17px;height:17px;border-radius:50%;background:#3a3a3a;border:1px solid #111"></div>
<div id="t61" class="t" style="transform:scaleX(1.0539);left:776px;top:795px;font-size:17px;color:#cccccc;font-weight:normal;font-family:'Liberation Sans',sans-serif;-webkit-text-stroke:0.15px #cccccc">行と列を入力してください</div>
<div id="t62" class="t" style="transform:scaleX(1.0465);left:1000px;top:795px;font-size:15px;color:#cccccc;font-weight:normal;font-family:'Liberation Mono',monospace;">(<span style="font-size:17px;-webkit-text-stroke:0.15px #cccccc">例</span>: 2 3):</div>
<div class="abs" style="left:1100px;top:794px;width:10px;height:21px;background:#cccccc"></div>
<div class="abs" style="left:759px;top:509px;width:559px;height:353px;border:5px solid #ec1f26"></div>
<svg style="left:761px;top:668px" width="9" height="9" viewBox="0 0 9 9"><circle cx="4.5" cy="4.5" r="3.2" stroke="#6a6a6a" stroke-width="1.5" fill="none"/></svg>
</body></html>
